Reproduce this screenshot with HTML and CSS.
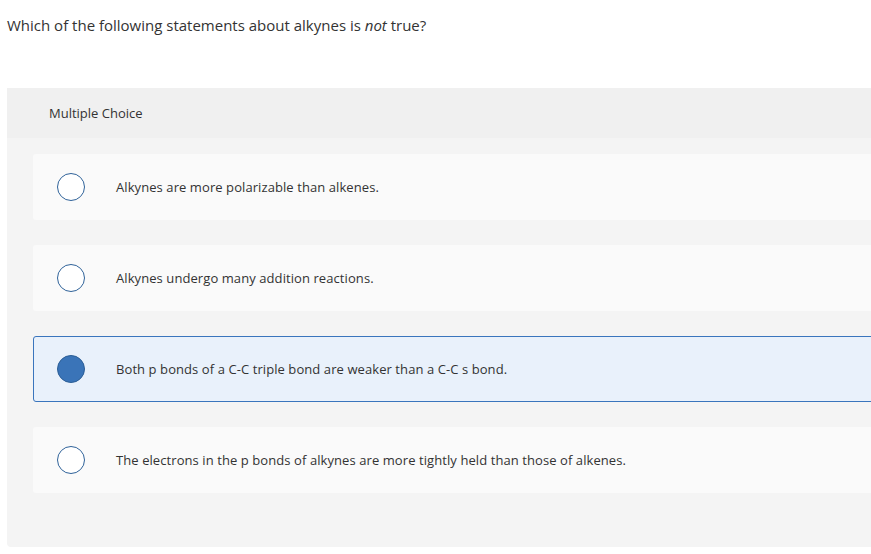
FILE: index.html
```html
<!DOCTYPE html>
<html>
<head>
  <title>Multiple Choice</title>
  <link rel="stylesheet" href="styles.css">
</head>
<body>
  <p class="question">Which of the following statements about alkynes is <i>not</i> true?</p>

  <div class="panel">
    <div class="panel-head">Multiple Choice</div>
    <div class="choices">
      <label class="choice">
        <span class="radio"></span>
        <span class="choice-text">Alkynes are more polarizable than alkenes.</span>
      </label>
      <label class="choice">
        <span class="radio"></span>
        <span class="choice-text">Alkynes undergo many addition reactions.</span>
      </label>
      <label class="choice selected">
        <span class="radio"></span>
        <span class="choice-text">Both p bonds of a C-C triple bond are weaker than a C-C s bond.</span>
      </label>
      <label class="choice">
        <span class="radio"></span>
        <span class="choice-text">The electrons in the p bonds of alkynes are more tightly held than those of alkenes.</span>
      </label>
    </div>
  </div>
</body>
</html>
```

FILE: styles.css
```css
body {
  margin: 0;
  font-family: "Open Sans", Lato, sans-serif;
  color: #333;
  background: #fff;
  overflow: hidden;
}

.question {
  margin: 0;
  padding: 15px 0 0 7px;
  font-size: 15px;
  line-height: 20px;
}

.panel {
  margin: 53px 0 0 7px;
  width: 900px;
  background: #f4f4f4;
  border-radius: 0 0 0 4px;
}

.panel-head {
  height: 50px;
  line-height: 50px;
  padding-left: 42px;
  font-size: 13px;
  background: #f0f0f0;
}

.choices {
  display: flex;
  flex-direction: column;
  gap: 25px;
  padding: 16px 0 54px 26px;
}

.choice {
  display: flex;
  align-items: center;
  height: 66px;
  box-sizing: border-box;
  padding-left: 24px;
  background: #fafafa;
  border-radius: 3px;
  font-size: 13px;
  letter-spacing: 0.08px;
}

.choice.selected {
  background: #e9f1fb;
  border: 1px solid #3a75bd;
  padding-left: 23px;
}

.radio {
  width: 28px;
  height: 28px;
  box-sizing: border-box;
  border: 1.5px solid #2f6299;
  border-radius: 50%;
  background: #fff;
  flex: none;
}

.selected .radio {
  background: #3a74b8;
  border-color: #2b5e96;
}

.choice-text {
  margin-left: 31px;
}
```
